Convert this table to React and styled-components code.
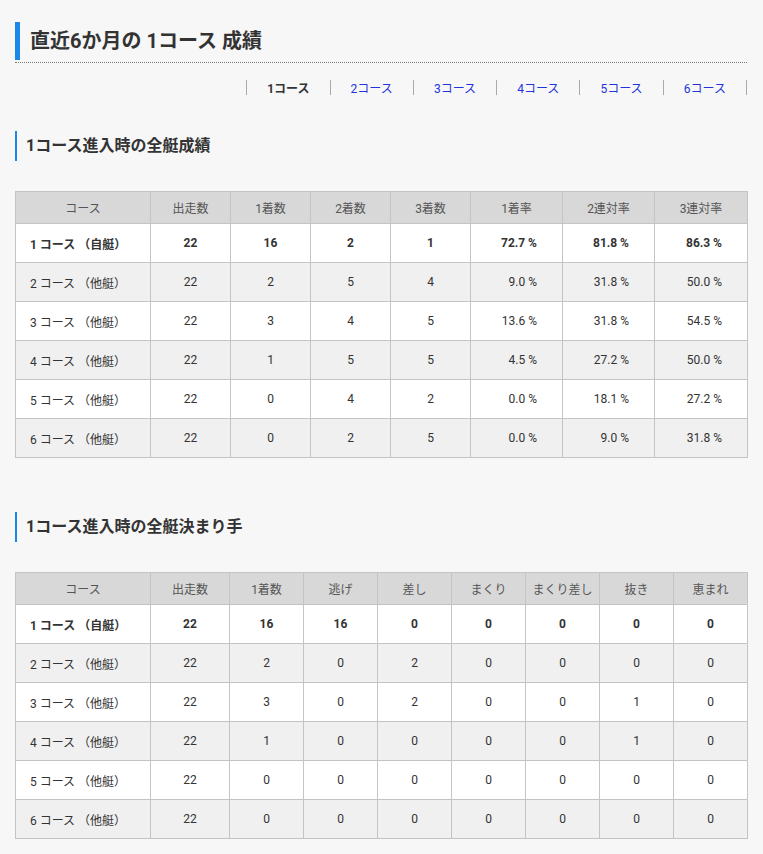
import React from "react";
import styled, { createGlobalStyle } from "styled-components";

const Global = createGlobalStyle`
  html, body { margin: 0; padding: 0; background: #f7f7f7; }
  body {
    font-family: Roboto, "Noto Sans CJK JP", "Noto Sans", sans-serif;
    color: #333;
  }
`;

const Page = styled.div`
  padding: 22px 16px 40px 15px;
  display: flex;
  flex-direction: column;
`;

const Title = styled.h1`
  margin: 0;
  font-size: 20px;
  font-weight: 700;
  color: #333;
  line-height: 38px;
  padding-left: 10px;
  border-left: 5px solid #1a88e6;
  position: relative;
  &::after {
    content: "";
    position: absolute;
    left: -5px;
    right: 0;
    bottom: -3px;
    border-bottom: 1px dotted #777;
  }
`;

const Nav = styled.ul`
  list-style: none;
  margin: 20px 0 0;
  padding: 0;
  display: flex;
  justify-content: flex-end;
`;

const NavItem = styled.li`
  width: 82.3px;
  border-left: 1px solid #aaa;
  height: 15px;
  display: flex;
  align-items: center;
  justify-content: center;
  font-size: 12px;
  &:last-child { border-right: 1px solid #aaa; }
`;

const NavLink = styled.a`
  color: ${(p) => (p.$active ? "#333" : "#2233dd")};
  font-weight: ${(p) => (p.$active ? 700 : 400)};
  text-decoration: none;
  cursor: pointer;
`;

const SubTitle = styled.h2`
  margin: ${(p) => p.$mt}px 0 0;
  font-size: 16px;
  font-weight: 700;
  color: #333;
  line-height: 30px;
  padding-left: 9px;
  border-left: 2px solid #1a88e6;
`;

const Table = styled.table`
  margin-top: 30px;
  width: 732px;
  border-collapse: collapse;
  table-layout: fixed;
  font-size: 12px;
`;

const Th = styled.th`
  background: #d8d8d8;
  border: 1px solid #c4c4c4;
  font-weight: 400;
  color: #555;
  height: 31px;
  padding: 0;
  text-align: center;
`;

const Tr = styled.tr`
  background: ${(p) => (p.$alt ? "#f0f0f0" : "#fff")};
  font-weight: ${(p) => (p.$bold ? 700 : 400)};
`;

const Td = styled.td`
  border: 1px solid #c4c4c4;
  height: 38px;
  padding: ${(p) => (p.$align === "left" ? "0 0 0 14px" : p.$align === "right" ? "0 25px 0 0" : "0")};
  text-align: ${(p) => p.$align || "center"};
  color: #333;
`;

const courses = [
  "1 コース （自艇）",
  "2 コース （他艇）",
  "3 コース （他艇）",
  "4 コース （他艇）",
  "5 コース （他艇）",
  "6 コース （他艇）",
];

const table1 = [
  ["22", "16", "2", "1", "72.7 %", "81.8 %", "86.3 %"],
  ["22", "2", "5", "4", "9.0 %", "31.8 %", "50.0 %"],
  ["22", "3", "4", "5", "13.6 %", "31.8 %", "54.5 %"],
  ["22", "1", "5", "5", "4.5 %", "27.2 %", "50.0 %"],
  ["22", "0", "4", "2", "0.0 %", "18.1 %", "27.2 %"],
  ["22", "0", "2", "5", "0.0 %", "9.0 %", "31.8 %"],
];

const table2 = [
  ["22", "16", "16", "0", "0", "0", "0", "0"],
  ["22", "2", "0", "2", "0", "0", "0", "0"],
  ["22", "3", "0", "2", "0", "0", "1", "0"],
  ["22", "1", "0", "0", "0", "0", "1", "0"],
  ["22", "0", "0", "0", "0", "0", "0", "0"],
  ["22", "0", "0", "0", "0", "0", "0", "0"],
];

const head1 = ["コース", "出走数", "1着数", "2着数", "3着数", "1着率", "2連対率", "3連対率"];
const widths1 = [135, 80, 80, 80, 80, 92, 92, 93];
const head2 = ["コース", "出走数", "1着数", "逃げ", "差し", "まくり", "まくり差し", "抜き", "恵まれ"];
const widths2 = [135, 79, 74, 74, 74, 74, 74, 74, 74];

function StatTable({ head, widths, rows, rightFrom }) {
  return (
    <Table>
      <colgroup>
        {widths.map((w, i) => (
          <col key={i} style={{ width: w }} />
        ))}
      </colgroup>
      <thead>
        <tr>
          {head.map((h) => (
            <Th key={h}>{h}</Th>
          ))}
        </tr>
      </thead>
      <tbody>
        {rows.map((r, i) => (
          <Tr key={i} $alt={i % 2 === 1} $bold={i === 0}>
            <Td $align="left">{courses[i]}</Td>
            {r.map((v, j) => (
              <Td key={j} $align={rightFrom !== undefined && j >= rightFrom ? "right" : "center"}>
                {v}
              </Td>
            ))}
          </Tr>
        ))}
      </tbody>
    </Table>
  );
}

export default function App() {
  return (
    <>
      <Global />
      <Page>
        <Title>直近6か月の 1コース 成績</Title>
        <Nav>
          {[1, 2, 3, 4, 5, 6].map((n) => (
            <NavItem key={n}>
              <NavLink $active={n === 1}>{n}コース</NavLink>
            </NavItem>
          ))}
        </Nav>
        <SubTitle $mt={36}>1コース進入時の全艇成績</SubTitle>
        <StatTable head={head1} widths={widths1} rows={table1} rightFrom={4} />
        <SubTitle $mt={54}>1コース進入時の全艇決まり手</SubTitle>
        <StatTable head={head2} widths={widths2} rows={table2} />
      </Page>
    </>
  );
}
